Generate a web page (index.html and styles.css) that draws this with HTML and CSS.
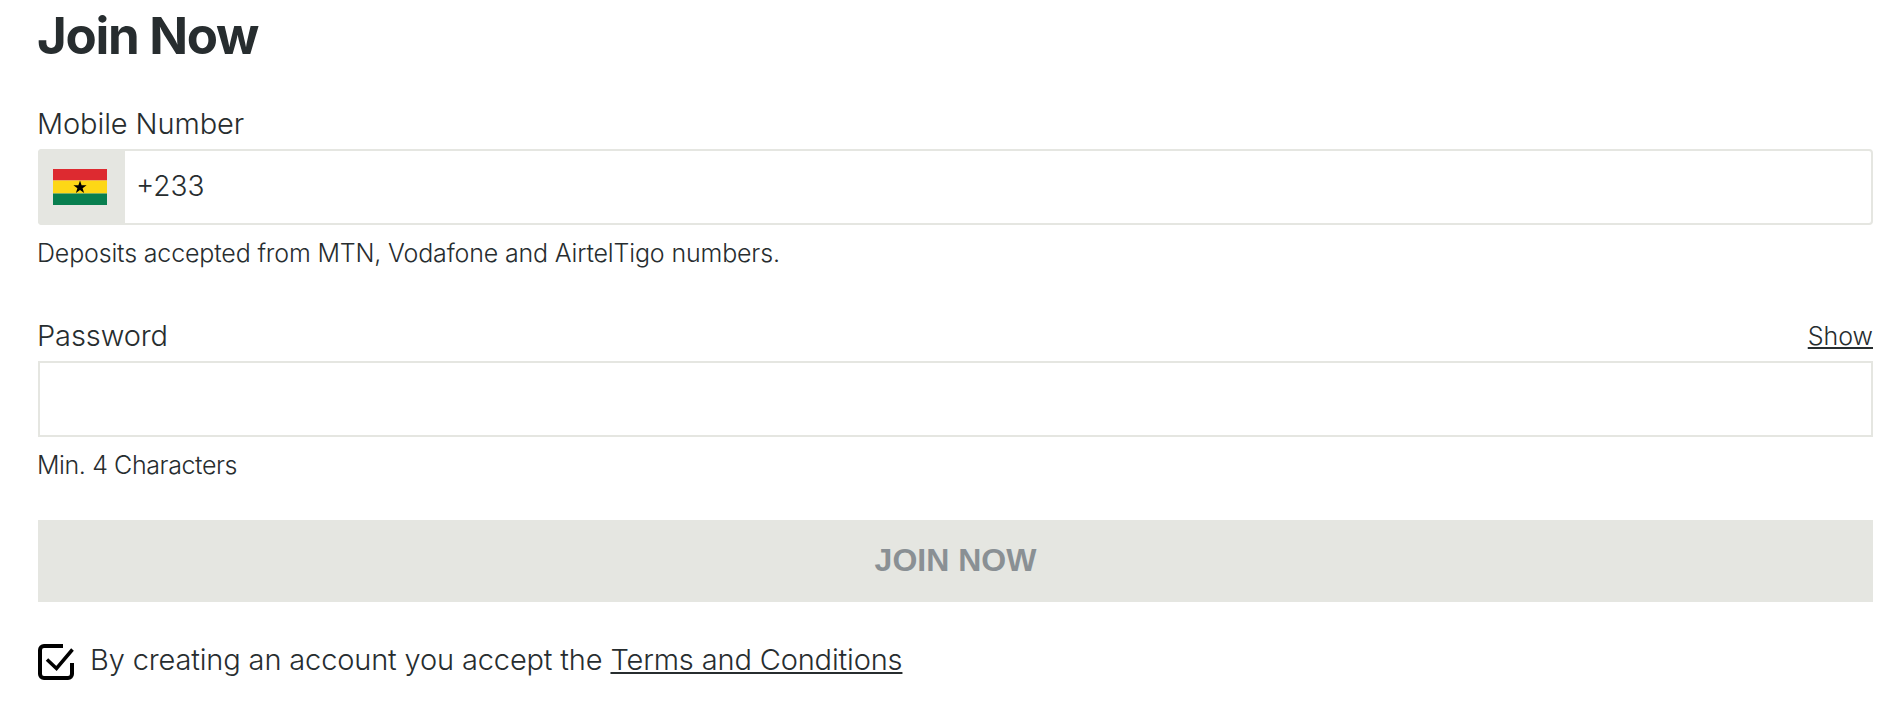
FILE: index.html
```html
<!DOCTYPE html>
<html lang="en">

<head>
    <meta charset="UTF-8">
    <meta name="viewport" content="width=device-width, initial-scale=1.0">
    <title>Join Now</title>
    <link rel="stylesheet" href="styles.css">
</head>

<body>
    <form class="join-form">
        <h1 class="join-title">Join Now</h1>

        <label class="field-label">Mobile Number</label>
        <div class="phone-input">
            <div class="phone-flag">
                <svg class="flag" viewBox="0 0 54 36" width="54" height="36">
                    <rect width="54" height="11.500" fill="#dd2a30"></rect>
                    <rect y="11.500" width="54" height="13" fill="#fdd716"></rect>
                    <rect y="24.500" width="54" height="11.500" fill="#087f4f"></rect>
                    <polygon fill="#000" points="27,11.500 28.600,16.200 33.600,16.200 29.600,19.200 31.100,24 27,21.100 22.900,24 24.400,19.200 20.400,16.200 25.400,16.200"></polygon>
                </svg>
            </div>
            <div class="phone-value">+233</div>
        </div>
        <p class="field-hint">Deposits accepted from MTN, Vodafone and AirtelTigo numbers.</p>

        <div class="password-head">
            <label class="field-label">Password</label>
            <a class="show-link" href="#">Show</a>
        </div>
        <div class="text-input"></div>
        <p class="field-hint field-hint-short">Min. 4 Characters</p>

        <button class="join-button" type="button" disabled>JOIN NOW</button>

        <div class="terms">
            <svg class="terms-check" viewBox="0 0 36 36" width="36" height="36">
                <path d="M25 2H6A4 4 0 0 0 2 6V30A4 4 0 0 0 6 34H30A4 4 0 0 0 34 30V19" fill="none" stroke="#000" stroke-width="4"></path>
                <path d="M9 15.500L18.500 24.500L34.500 5.500" fill="none" stroke="#000" stroke-width="3.500"></path>
            </svg>
            <span class="terms-text">By creating an account you accept the <a href="#">Terms and Conditions</a></span>
        </div>
    </form>
</body>

</html>
```

FILE: styles.css
```css
body {
    margin: 0;
    background: #fff;
    color: #272d2f;
    font-family: Inter, sans-serif;
    font-weight: 300;
    overflow: hidden;
}

.join-form {
    padding: 0 22px 0 37px;
}

.join-title {
    margin: 0 0 32px;
    font-size: 51px;
    line-height: 72px;
    font-weight: 700;
    letter-spacing: -1.300px;
}

.field-label {
    display: block;
    font-size: 29px;
    line-height: 40px;
    letter-spacing: -0.100px;
}

.phone-input {
    display: flex;
    height: 76px;
    margin: 5px 0 0 1px;
    box-sizing: border-box;
    border: 2px solid #e5e6e1;
    border-radius: 4px;
}

.phone-flag {
    display: flex;
    align-items: center;
    width: 72px;
    margin: -2px 0 -2px -2px;
    padding-left: 15px;
    background: #e5e6e1;
    border-radius: 4px 0 0 4px;
}

.flag {
    display: block;
}

.phone-value {
    display: flex;
    align-items: center;
    padding: 0 0 2px 11px;
    font-size: 28px;
}

.field-hint {
    margin: 11px 0 0;
    font-size: 25px;
    line-height: 34px;
    letter-spacing: -0.160px;
}

.field-hint-short {
    letter-spacing: -0.400px;
}

.password-head {
    display: flex;
    justify-content: space-between;
    align-items: center;
    margin-top: 46px;
}

.show-link {
    font-size: 25px;
    line-height: 34px;
    color: inherit;
}

.text-input {
    height: 76px;
    margin: 5px 0 0 1px;
    box-sizing: border-box;
    border: 2px solid #e5e6e1;
}

.join-button {
    display: block;
    width: calc(100% - 1px);
    height: 82px;
    margin: 38px 0 0 1px;
    padding: 0 0 2px;
    border: 0;
    background: #e5e6e1;
    color: #8a9094;
    font-family: "Liberation Sans", sans-serif;
    font-size: 32px;
    font-weight: 700;
}

.terms {
    display: flex;
    align-items: center;
    gap: 16px;
    margin: 42px 0 0 1px;
    font-size: 29px;
    letter-spacing: -0.150px;
}

.terms-text {
    line-height: 32px;
    padding-bottom: 4px;
}

.terms a {
    color: inherit;
}

.terms-check {
    display: block;
    flex-shrink: 0;
}
```
